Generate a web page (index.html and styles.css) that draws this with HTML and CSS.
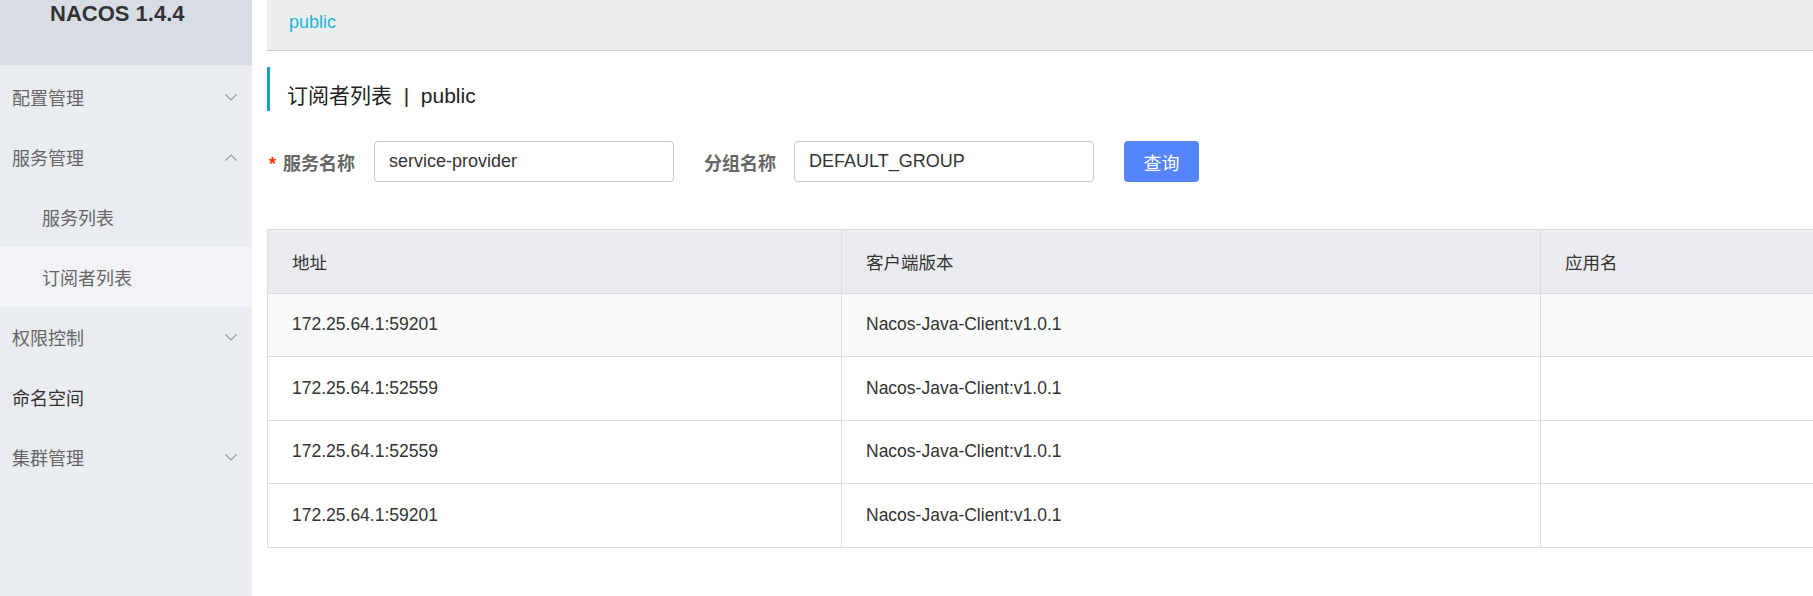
FILE: index.html
```html
<!DOCTYPE html>
<html lang="zh-CN">
<head>
<meta charset="utf-8">
<title>Nacos</title>
<link rel="stylesheet" href="styles.css">
</head>
<body>
<div class="layout">
  <aside class="sidebar">
    <div class="logo">NACOS 1.4.4</div>
    <ul class="menu">
      <li class="menu-item"><span>配置管理</span><svg class="chev" width="12" height="7" viewBox="0 0 12 7"><polyline points="0.5,0.5 6,6 11.5,0.5"/></svg></li>
      <li class="menu-item"><span>服务管理</span><svg class="chev" width="12" height="7" viewBox="0 0 12 7"><polyline points="0.5,6.5 6,1 11.5,6.5"/></svg></li>
      <li class="menu-item sub"><span>服务列表</span></li>
      <li class="menu-item sub active"><span>订阅者列表</span></li>
      <li class="menu-item"><span>权限控制</span><svg class="chev" width="12" height="7" viewBox="0 0 12 7"><polyline points="0.5,0.5 6,6 11.5,0.5"/></svg></li>
      <li class="menu-item dark"><span>命名空间</span></li>
      <li class="menu-item"><span>集群管理</span><svg class="chev" width="12" height="7" viewBox="0 0 12 7"><polyline points="0.5,0.5 6,6 11.5,0.5"/></svg></li>
    </ul>
  </aside>
  <main class="main">
    <div class="topbar"><span class="ns">public</span></div>
    <div class="title">订阅者列表&nbsp;&nbsp;|&nbsp;&nbsp;public</div>
    <div class="form">
      <label class="label"><span class="req">*</span>服务名称</label>
      <div class="input">service-provider</div>
      <label class="label second">分组名称</label>
      <div class="input">DEFAULT_GROUP</div>
      <button class="btn">查询</button>
    </div>
    <div class="table-wrap">
      <table class="table">
        <colgroup><col class="c1"><col class="c2"><col class="c3"></colgroup>
        <thead>
          <tr><th>地址</th><th>客户端版本</th><th>应用名</th></tr>
        </thead>
        <tbody>
          <tr class="hover"><td>172.25.64.1:59201</td><td>Nacos-Java-Client:v1.0.1</td><td></td></tr>
          <tr><td>172.25.64.1:52559</td><td>Nacos-Java-Client:v1.0.1</td><td></td></tr>
          <tr><td>172.25.64.1:52559</td><td>Nacos-Java-Client:v1.0.1</td><td></td></tr>
          <tr><td>172.25.64.1:59201</td><td>Nacos-Java-Client:v1.0.1</td><td></td></tr>
        </tbody>
      </table>
    </div>
  </main>
</div>
</body>
</html>
```

FILE: styles.css
```css
* { box-sizing: border-box; }
html, body {
  margin: 0;
  padding: 0;
  height: 100%;
  overflow: hidden;
  background: #fff;
  font-family: "Liberation Sans", "Noto Sans CJK SC", sans-serif;
  color: #333;
}
.layout {
  display: flex;
  height: 596px;
}
.sidebar {
  width: 252px;
  flex: none;
  background: #e9ecf1;
}
.logo {
  height: 65px;
  background: #d8dde5;
  padding: 1px 0 0 50px;
  font-size: 22px;
  line-height: 25px;
  font-weight: bold;
  color: #333;
}
.menu {
  list-style: none;
  margin: 2px 0 0;
  padding: 0;
}
.menu-item {
  height: 60px;
  display: flex;
  align-items: center;
  justify-content: space-between;
  padding: 0 15px 0 12px;
  font-size: 18px;
  color: #666;
}
.menu-item.sub { padding-left: 42px; }
.menu-item.active { background: #f2f3f7; }
.menu-item.dark { color: #333; }
.chev {
  fill: none;
  stroke: #999;
  stroke-width: 1.2;
}
.main {
  flex: 1;
  min-width: 0;
  padding-left: 15px;
  overflow: hidden;
}
.topbar {
  height: 51px;
  background: #eee;
  border-bottom: 1px solid #ccc;
  padding-left: 22px;
  display: flex;
  align-items: center;
}
.ns {
  color: #1cb5d9;
  font-size: 18px;
  margin-top: -6px;
}
.title {
  margin-top: 16px;
  height: 44px;
  border-left: 3px solid #1b9bd3;
  padding: 14px 0 0 17px;
  font-size: 21px;
  line-height: 30px;
  color: #222;
}
.form {
  margin-top: 30px;
  display: flex;
  align-items: center;
  height: 41px;
}
.label {
  font-size: 18px;
  font-weight: bold;
  color: #666;
  margin-right: 19px;
}
.label.second { margin-left: 30px; margin-right: 18px; }
.req {
  color: #ff3000;
  margin: 0 7px 0 2px;
}
.input {
  width: 300px;
  height: 41px;
  border: 1px solid #c4c6cf;
  border-radius: 4px;
  padding: 0 14px;
  display: flex;
  align-items: center;
  font-size: 18px;
  color: #333;
}
.btn {
  margin-left: 30px;
  width: 75px;
  height: 41px;
  border: none;
  border-radius: 4px;
  background: #5584ff;
  color: #fff;
  font-family: inherit;
  font-size: 18px;
}
.table-wrap {
  margin-top: 47px;
}
.table {
  border-collapse: collapse;
  table-layout: fixed;
  width: 1800px;
  font-size: 17.5px;
  color: #333;
}
.c1 { width: 574px; }
.c2 { width: 699px; }
.c3 { width: 527px; }
.table th, .table td {
  height: 63.5px;
  padding: 0 24px;
  text-align: left;
  font-weight: normal;
  border: 1px solid #dcdee3;
}
.table th {
  background: #ebecf0;
}
.table tr.hover td { background: #f9fbfa; }
```
